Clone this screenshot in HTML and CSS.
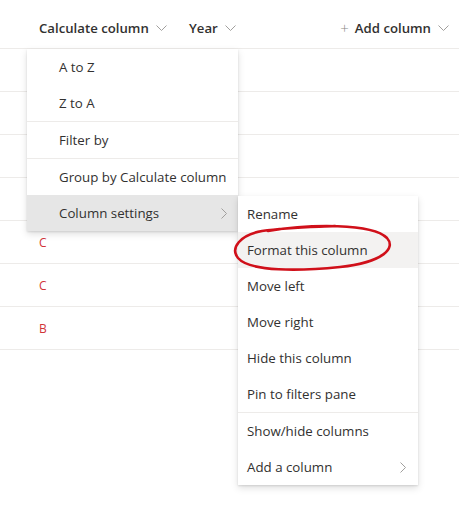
FILE: index.html
```html
<!DOCTYPE html>
<html>
<head>
<meta charset="utf-8">
<link rel="stylesheet" href="styles.css">
</head>
<body>
<div class="page">
  <div class="header">
    <div class="hcell c1">Calculate column <svg class="chev" width="11" height="6" viewBox="0 0 11 6"><polyline points="0.5,0.5 5.5,5.5 10.5,0.5"/></svg></div>
    <div class="hcell c2">Year <svg class="chev" width="11" height="6" viewBox="0 0 11 6"><polyline points="0.5,0.5 5.5,5.5 10.5,0.5"/></svg></div>
    <div class="hcell c3"><span class="plus">+</span> Add column <svg class="chev" width="11" height="6" viewBox="0 0 11 6"><polyline points="0.5,0.5 5.5,5.5 10.5,0.5"/></svg></div>
  </div>
  <div class="row"></div>
  <div class="row"></div>
  <div class="row"></div>
  <div class="row"></div>
  <div class="row"><span class="val">C</span></div>
  <div class="row"><span class="val">C</span></div>
  <div class="row"><span class="val">B</span></div>

  <div class="menu main">
    <div class="item">A to Z</div>
    <div class="item">Z to A</div>
    <div class="sep"></div>
    <div class="item">Filter by</div>
    <div class="sep"></div>
    <div class="item">Group by Calculate column</div>
    <div class="item active">Column settings <svg class="rchev" width="6" height="11" viewBox="0 0 6 11"><polyline points="0.5,0.5 5.5,5.5 0.5,10.5"/></svg></div>
  </div>

  <div class="menu sub">
    <div class="item">Rename</div>
    <div class="item hover">Format this column</div>
    <div class="item">Move left</div>
    <div class="item">Move right</div>
    <div class="item">Hide this column</div>
    <div class="item">Pin to filters pane</div>
    <div class="sep"></div>
    <div class="item">Show/hide columns</div>
    <div class="item">Add a column <svg class="rchev" width="6" height="11" viewBox="0 0 6 11"><polyline points="0.5,0.5 5.5,5.5 0.5,10.5"/></svg></div>
  </div>

  <svg class="circle" width="459" height="512" viewBox="0 0 459 512">
    <path d="M 268 231 C 310 224, 372 223, 387 238 C 396 248, 384 262, 340 267 C 300 271, 250 272, 238 258 C 230 248, 240 235, 262 231 C 290 227, 320 227, 335 226"/>
  </svg>
</div>
</body>
</html>
```
FILE: styles.css
```css
* { box-sizing: border-box; }
html, body { margin: 0; padding: 0; background: #fff; }
body {
  font-family: "Open Sans", "Noto Sans", sans-serif;
  color: #323130;
  width: 459px;
  height: 512px;
  overflow: hidden;
}
.page { position: relative; width: 459px; height: 512px; }
.header {
  height: 49px;
  display: flex;
  align-items: center;
  border-bottom: 1px solid #edebe9;
  font-size: 13.2px;
  font-weight: 600;
  padding-top: 8px;
}
.hcell { display: flex; align-items: center; white-space: nowrap; }
.c1 { margin-left: 39px; width: 150px; }
.c2 { width: 150px; }
.c3 { margin-left: auto; margin-right: 10px; }
.chev { margin-left: 7px; fill: none; stroke: #a19f9d; stroke-width: 1; }
.plus { color: #8a8886; font-weight: 300; font-size: 15px; margin-right: 6px; }
.row {
  height: 43px;
  border-bottom: 1px solid #edebe9;
  display: flex;
  align-items: center;
  padding-left: 39px;
}
.val { color: #d13438; font-size: 12px; }

.menu {
  position: absolute;
  background: #fff;
  box-shadow: 0 3.2px 7.2px rgba(0,0,0,0.13), 0 0.6px 1.8px rgba(0,0,0,0.11);
  font-size: 13.3px;
}
.main { left: 27px; top: 49px; width: 211px; }
.sub { left: 238px; top: 196px; width: 180px; }
.item {
  height: 36px;
  display: flex;
  align-items: center;
  white-space: nowrap;
}
.main .item { padding-left: 32px; padding-right: 11px; }
.sub .item { padding-left: 9px; padding-right: 12px; }
.sep { height: 1px; background: #edebe9; }
.active { background: #e6e6e6; }
.hover { background: #f3f2f1; }
.rchev { margin-left: auto; fill: none; stroke: #a19f9d; stroke-width: 1; }
.circle {
  position: absolute;
  left: 0; top: 0;
  pointer-events: none;
}
.circle path { fill: none; stroke: #d0101a; stroke-width: 2.6; stroke-linecap: round; }
```
